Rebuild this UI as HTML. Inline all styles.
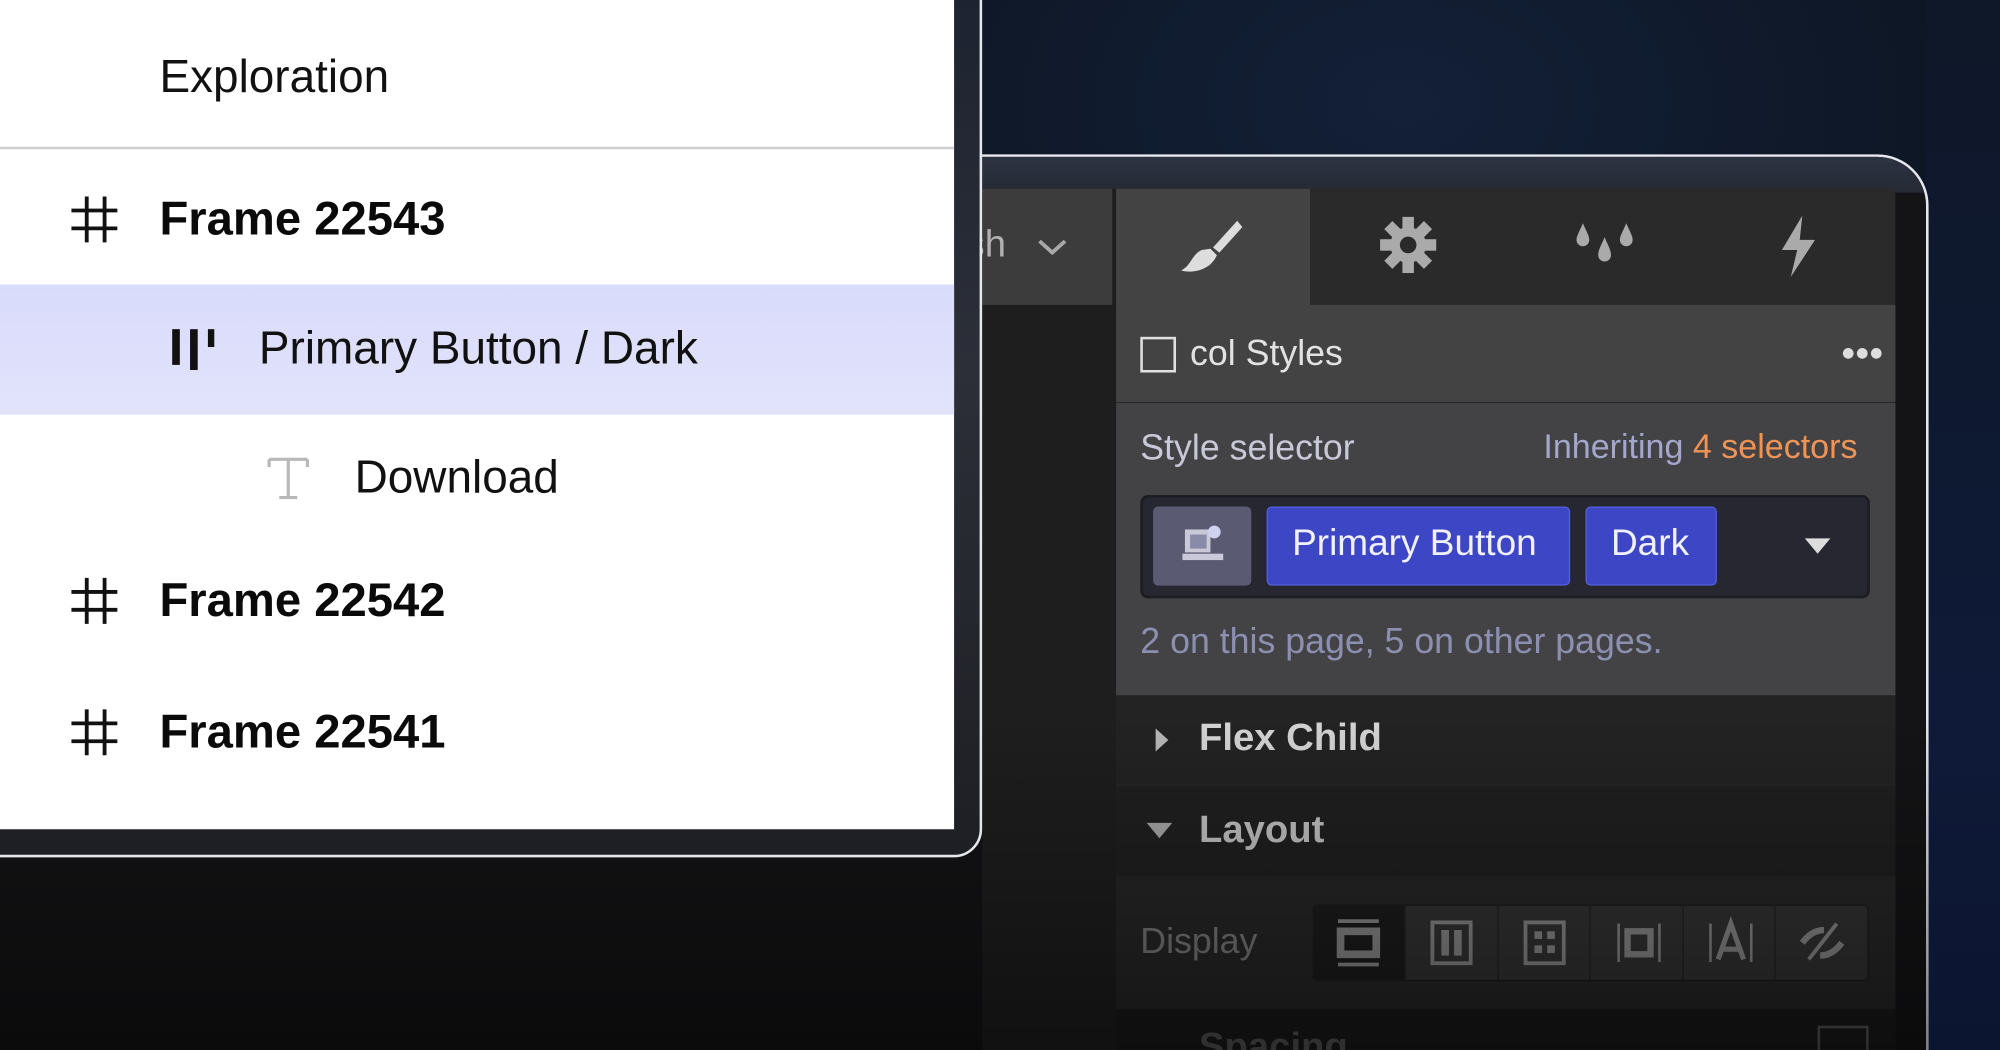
<!DOCTYPE html>
<html><head><meta charset="utf-8"><style>
*{margin:0;padding:0;box-sizing:border-box}
html,body{width:2000px;height:1050px;overflow:hidden;background:#0b0e14}
#w{position:absolute;left:0;top:0;width:1568px;height:823px;transform:scale(1.27551,1.2758);transform-origin:0 0;font-family:"Liberation Sans",sans-serif;overflow:hidden;
background:radial-gradient(ellipse 900px 600px at 1100px 80px,#132038 0%,#0d1522 55%,#0c0d10 100%)}
.a{position:absolute}
.t{position:absolute;white-space:nowrap;line-height:1}
</style></head><body><div id="w">
<div class="a" style="left:1510px;top:0;width:58px;height:823px;background:linear-gradient(180deg,#0f1828,#0e1a38 70%,#0c1530)"></div>
<!-- monitor -->
<div class="a" style="left:-100px;top:121px;width:1612px;height:760px;border:2.5px solid #e6e8ee;border-radius:40px;background:#141416;overflow:hidden">
 <div class="a" style="left:-2px;top:-2px;width:1612px;height:30px;background:linear-gradient(180deg,#2c3342,#252a34)"></div>
</div>
<div class="a" style="left:770px;top:148px;width:105px;height:700px;background:#1f1e1f"></div>
<div class="a" style="left:770px;top:148px;width:102px;height:91px;background:#3c3c3c"></div>
<div class="t" style="left:757px;top:177px;font-size:30px;color:#b0b0b0">sh</div>
<svg class="a" style="left:812px;top:185px" width="26" height="18" viewBox="0 0 26 18"><path d="M3 4l10 9 10-9" fill="none" stroke="#a8a8a8" stroke-width="3"/></svg>
<!-- right panel -->
<div class="a" style="left:875px;top:148px;width:611px;height:700px;background:#2a2a2a"></div>
<div class="a" style="left:875px;top:148px;width:152px;height:91px;background:#434343"></div>
<svg class="a" style="left:920px;top:170px" width="56" height="46" viewBox="0 0 56 46"><path d="M50 3 L54 8 L36 28 L31 24 Z" fill="#ddd"/><path d="M29 25 L34 30 C30 40 18 45 6 42 C14 38 14 30 22 26 Z" fill="#ddd"/></svg>
<svg class="a" style="left:1081px;top:169px" width="46" height="46" viewBox="-23 -23 46 46"><g fill="#aaa"><circle r="14"/><rect x="-4.5" y="-22" width="9" height="44"/><rect x="-4.5" y="-22" width="9" height="44" transform="rotate(45)"/><rect x="-4.5" y="-22" width="9" height="44" transform="rotate(90)"/><rect x="-4.5" y="-22" width="9" height="44" transform="rotate(135)"/></g><circle r="6.5" fill="#2a2a2a"/></svg>
<svg class="a" style="left:1234px;top:172px" width="48" height="40" viewBox="0 0 48 40"><g fill="#aaa"><path d="M7 3 C4 10 2 13 2 16 a5 5 0 0 0 10 0 C12 13 10 10 7 3Z"/><path d="M41 3 C38 10 36 13 36 16 a5 5 0 0 0 10 0 C46 13 44 10 41 3Z"/><path d="M24 14 C21 21 19 24 19 28 a5 5 0 0 0 10 0 C29 24 27 21 24 14Z"/></g></svg>
<svg class="a" style="left:1393px;top:168px" width="34" height="50" viewBox="0 0 34 50"><path d="M20 1 L4 28 L16 28 L11 49 L30 20 L18 20 Z" fill="#aaa"/></svg>
<div class="a" style="left:875px;top:239px;width:611px;height:76px;background:#434343"></div>
<div class="a" style="left:894px;top:264px;width:28px;height:28px;border:2.5px solid #e0e0e0"></div>
<div class="t" style="left:933px;top:263px;font-size:28px;color:#e2e2e2">col Styles</div>
<svg class="a" style="left:1444px;top:271px" width="32" height="12" viewBox="0 0 32 12"><g fill="#ddd"><circle cx="5" cy="6" r="4.2"/><circle cx="16" cy="6" r="4.2"/><circle cx="27" cy="6" r="4.2"/></g></svg>
<div class="a" style="left:875px;top:316px;width:611px;height:229px;background:radial-gradient(ellipse 380px 220px at 1150px 410px,#3e3f86 0%,#3f4062 45%,#434346 100%)"></div>
<div class="t" style="left:894px;top:337px;font-size:28px;color:#c8c8d8">Style selector</div>
<div class="t" style="left:1210px;top:337px;font-size:26.7px;color:#a4a6cc">Inheriting <span style="color:#ef9455">4 selectors</span></div>
<div class="a" style="left:894px;top:388px;width:572px;height:81px;background:#262730;border:2px solid #1c1c22;border-radius:6px"></div>
<div class="a" style="left:904px;top:397px;width:77px;height:62px;background:#5a5b72;border-radius:4px"></div>
<svg class="a" style="left:925px;top:410px" width="36" height="34" viewBox="0 0 36 34"><rect x="4" y="5" width="20" height="18" fill="#c8c8d8"/><rect x="8" y="9" width="13" height="11" fill="#8a8ba8"/><rect x="2" y="24" width="32" height="5" fill="#c8c8d8"/><circle cx="27" cy="7" r="5" fill="#d0d2f0"/></svg>
<div class="a" style="left:993px;top:397px;width:238px;height:62px;background:#3d47c6;border:1.5px solid #5360e0;border-radius:4px"></div>
<div class="t" style="left:1013px;top:412px;font-size:29px;color:#f0f0ff">Primary Button</div>
<div class="a" style="left:1243px;top:397px;width:103px;height:62px;background:#3d47c6;border:1.5px solid #5360e0;border-radius:4px"></div>
<div class="t" style="left:1263px;top:412px;font-size:29px;color:#f0f0ff">Dark</div>
<svg class="a" style="left:1414px;top:421px" width="22" height="14" viewBox="0 0 22 14"><path d="M1 1h20L11 13Z" fill="#ddd"/></svg>
<div class="t" style="left:894px;top:489px;font-size:28px;color:#8d8fb0">2 on this page, 5 on other pages.</div>
<div class="a" style="left:875px;top:545px;width:611px;height:70px;background:#232323"></div>
<svg class="a" style="left:904px;top:570px" width="14" height="20" viewBox="0 0 14 20"><path d="M2 1l10 9-10 9Z" fill="#b8b8b8"/></svg>
<div class="t" style="left:940px;top:564px;font-size:30px;font-weight:bold;color:#d4d4d4">Flex Child</div>
<div class="a" style="left:875px;top:616px;width:611px;height:71px;background:#202020"></div>
<svg class="a" style="left:898px;top:644px" width="22" height="14" viewBox="0 0 22 14"><path d="M1 1h20L11 13Z" fill="#a8a8a8"/></svg>
<div class="t" style="left:940px;top:636px;font-size:30px;font-weight:bold;color:#c4c4c4">Layout</div>
<div class="a" style="left:875px;top:687px;width:611px;height:104px;background:#272727"></div>
<div class="t" style="left:894px;top:724px;font-size:28px;color:#7a7a7a">Display</div>
<div class="a" style="left:1029px;top:709px;width:436px;height:60px;background:#333;border:1.5px solid #1c1c1c;border-radius:4px"></div>
<div class="a" style="left:1030px;top:710px;width:71px;height:58px;background:#1c1c1c"></div>
<div class="a" style="left:1101px;top:710px;width:1px;height:58px;background:#222"></div>
<div class="a" style="left:1174px;top:710px;width:1px;height:58px;background:#222"></div>
<div class="a" style="left:1246px;top:710px;width:1px;height:58px;background:#222"></div>
<div class="a" style="left:1319px;top:710px;width:1px;height:58px;background:#222"></div>
<div class="a" style="left:1391px;top:710px;width:1px;height:58px;background:#222"></div>
<svg class="a" style="left:1030px;top:710px" width="436" height="58" viewBox="0 0 436 58" fill="none" stroke="#8a8a8a">
<path d="M19 12h32M19 46h32" stroke-width="3"/><rect x="21" y="20" width="28" height="18" stroke-width="6"/>
<rect x="93" y="13" width="30" height="32" stroke-width="3"/><path d="M103 19v20M113 19v20" stroke-width="6"/>
<rect x="166" y="13" width="30" height="32" stroke-width="3"/><g fill="#8a8a8a" stroke="none"><rect x="173" y="20" width="6" height="6"/><rect x="183" y="20" width="6" height="6"/><rect x="173" y="31" width="6" height="6"/><rect x="183" y="31" width="6" height="6"/></g>
<path d="M239 14v30M271 14v30" stroke-width="2"/><rect x="246" y="20" width="18" height="18" stroke-width="5"/>
<path d="M311 14v30M343 14v30" stroke-width="2"/><path d="M317 42l10-28 10 28M320 34h14" stroke-width="4"/>
<path d="M388 42l22-28" stroke-width="3"/><path d="M383 29c6-8 12-10 17-10M414 29c-6 8-12 10-17 10" stroke-width="5"/>
</svg>
<div class="a" style="left:875px;top:791px;width:611px;height:40px;background:#1a1a1a"></div>
<div class="t" style="left:940px;top:806px;font-size:30px;font-weight:bold;color:#555">Spacing</div>
<div class="a" style="left:1425px;top:804px;width:40px;height:30px;border:2px solid #555"></div>
<div class="a" style="left:0;top:560px;width:1512px;height:263px;background:linear-gradient(180deg,rgba(0,0,0,0),rgba(0,0,0,0.45))"></div>
<!-- left device -->
<div class="a" style="left:-30px;top:-30px;width:800px;height:702px;background:linear-gradient(180deg,#1c2230,#2c2f38 45%,#1e1f24);border:2.5px solid #e4e6ea;border-radius:0 0 22px 0"></div>
<div class="a" style="left:0;top:0;width:748px;height:650px;background:#fff"></div>
<div class="a" style="left:0;top:115px;width:748px;height:1.5px;background:#cfcfcf"></div>
<div class="t" style="left:125px;top:42px;font-size:36px;color:#111">Exploration</div>
<svg class="a" style="left:54px;top:152px" width="40" height="40" viewBox="0 0 40 40"><path d="M14 2v36M28 2v36M2 13h36M2 27h36" stroke="#111" stroke-width="3"/></svg>
<div class="t" style="left:125px;top:153px;font-size:37px;font-weight:bold;color:#0a0a0a">Frame 22543</div>
<div class="a" style="left:0;top:223px;width:748px;height:102px;background:linear-gradient(180deg,#d9dbfb,#e2e3fb)"></div>
<svg class="a" style="left:133px;top:256px" width="36" height="34" viewBox="0 0 36 34"><rect x="2" y="2" width="6" height="28" fill="#111"/><rect x="16" y="2" width="6" height="32" fill="#111"/><rect x="30" y="2" width="5" height="14" fill="#111"/></svg>
<div class="t" style="left:203px;top:255px;font-size:36px;color:#111">Primary Button / Dark</div>
<svg class="a" style="left:208px;top:357px" width="36" height="36" viewBox="0 0 36 36"><path d="M3 3h30M18 3v30M11 33h14M3 3v6M33 3v6" stroke="#b8b8b8" stroke-width="2.5" fill="none"/></svg>
<div class="t" style="left:278px;top:356px;font-size:36px;color:#111">Download</div>
<svg class="a" style="left:54px;top:451px" width="40" height="40" viewBox="0 0 40 40"><path d="M14 2v36M28 2v36M2 13h36M2 27h36" stroke="#111" stroke-width="3"/></svg>
<div class="t" style="left:125px;top:452px;font-size:37px;font-weight:bold;color:#0a0a0a">Frame 22542</div>
<svg class="a" style="left:54px;top:554px" width="40" height="40" viewBox="0 0 40 40"><path d="M14 2v36M28 2v36M2 13h36M2 27h36" stroke="#111" stroke-width="3"/></svg>
<div class="t" style="left:125px;top:555px;font-size:37px;font-weight:bold;color:#0a0a0a">Frame 22541</div>
</div></body></html>
